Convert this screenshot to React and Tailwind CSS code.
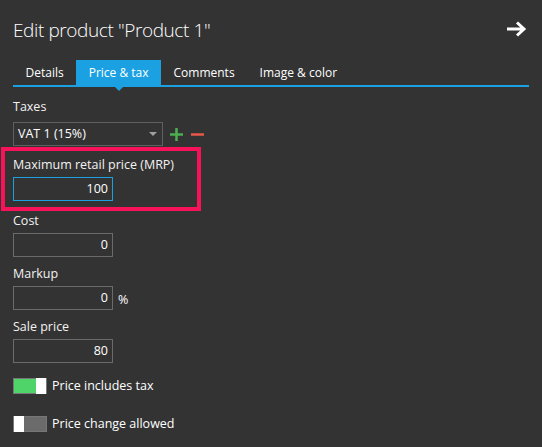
import { useState } from 'react'

const font = { fontFamily: '"Open Sans", "Noto Sans", sans-serif' }

function Field({ label, value, suffix, active }) {
    return (
        <div>
            <p className="h-[18px] text-[12.5px] leading-[18px] text-[#f2f2f2]">{label}</p>
            <div className="mt-[3px] flex items-center">
                <div
                    className={`flex h-[24px] w-[100px] items-center justify-end border px-[4px] text-[12.5px] text-white ${active ? 'border-[#1ba1e2]' : 'border-[#6b6b6b]'}`}
                >
                    {value}
                </div>
                {suffix && <span className="ml-[5px] mt-[4px] text-[12.5px] text-white">{suffix}</span>}
            </div>
        </div>
    )
}

function Toggle({ on, label }) {
    return (
        <div className="flex h-[16px] items-center">
            <div className={`flex h-[16px] w-[34px] border border-[#777] ${on ? 'justify-end bg-[#4fd46a]' : 'justify-start bg-[#6b6b6b]'}`}>
                <div className="-my-px h-[16px] w-[10px] bg-white" />
            </div>
            <span className="ml-[5px] text-[12.5px] text-white">{label}</span>
        </div>
    )
}

export default function App() {
    const [tab, setTab] = useState('Price & tax')
    const tabs = ['Details', 'Price & tax', 'Comments', 'Image & color']

    return (
        <div className="h-[447px] w-[542px] overflow-hidden bg-[#333333] px-[13px]" style={font}>
            <div className="flex h-[60px] items-center justify-between">
                <h1 className="text-[19px] font-light tracking-[-0.4px] text-white">Edit product "Product 1"</h1>
                <svg width="21" height="16" viewBox="0 0 21 16" className="mr-[2px] mb-[2px]">
                    <path d="M1 8h17M11 1.5l7 6.5-7 6.5" fill="none" stroke="white" strokeWidth="3" />
                </svg>
            </div>

            <div className="flex h-[25px] items-stretch border-b-2 border-[#1ba1e2] box-content">
                {tabs.map((t) => (
                    <button
                        key={t}
                        type="button"
                        onClick={() => setTab(t)}
                        className={`relative px-[12.5px] text-[12px] leading-[25px] text-white ${tab === t ? 'bg-[#1ba1e2]' : ''}`}
                    >
                        {t}
                        {tab === t && (
                            <span className="absolute left-1/2 top-full mt-[2px] h-0 w-0 -translate-x-1/2 border-x-[4px] border-t-[4px] border-x-transparent border-t-[#1ba1e2]" />
                        )}
                    </button>
                ))}
            </div>

            <p className="mt-[11px] h-[18px] text-[12.5px] leading-[18px] text-[#f2f2f2]">Taxes</p>
            <div className="mt-[6px] flex items-center">
                <div className="flex h-[24px] w-[150px] items-center justify-between border border-[#5f5f5f] pl-[4px] pr-[5px] text-[12.5px] text-white">
                    <span>VAT 1 (15%)</span>
                    <span className="h-0 w-0 border-x-[4px] border-t-[4px] border-x-transparent border-t-[#a0a0a0]" />
                </div>
                <svg width="13" height="13" viewBox="0 0 13 13" className="ml-[7px]">
                    <path d="M6.5 0v13M0 6.5h13" stroke="#4caf50" strokeWidth="2.5" />
                </svg>
                <svg width="13" height="13" viewBox="0 0 13 13" className="ml-[8px]">
                    <path d="M0 6.5h13" stroke="#e8584a" strokeWidth="2.5" />
                </svg>
            </div>

            <div className="-ml-[12px] mt-px w-[200px] border-4 border-[#f7125a] pb-[6px] pl-[8px] pt-[5px]">
                <Field label="Maximum retail price (MRP)" value="100" active />
            </div>

            <div className="mt-[1px]">
                <Field label="Cost" value="0" />
            </div>
            <div className="mt-[8px]">
                <Field label="Markup" value="0" suffix="%" />
            </div>
            <div className="mt-[8px]">
                <Field label="Sale price" value="80" />
            </div>

            <div className="mt-[15px]">
                <Toggle on label="Price includes tax" />
            </div>
            <div className="mt-[22px]">
                <Toggle label="Price change allowed" />
            </div>
        </div>
    )
}
